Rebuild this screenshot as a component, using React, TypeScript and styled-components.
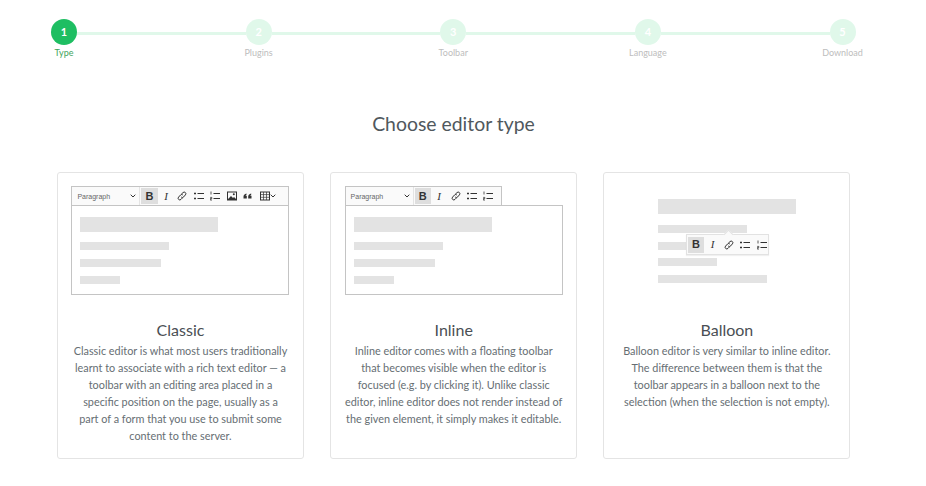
import { Fragment, ReactNode } from "react";
import styled, { createGlobalStyle } from "styled-components";

const GlobalStyle = createGlobalStyle`
  html, body {
    margin: 0;
    background: #fff;
    font-family: "Lato", "Open Sans", sans-serif;
  }
`;

const Page = styled.div`
  width: 793px;
  padding: 19px 0 0 57px;
`;

const Stepper = styled.div`
  display: flex;
  margin: 0 0 0 -6px;
  width: 804.5px;
`;

const Step = styled.div`
  display: flex;
  flex: none;
  flex-direction: column;
  align-items: center;
  width: 26px;
`;

const Circle = styled.div<{ $active?: boolean }>`
  display: flex;
  flex: none;
  align-items: center;
  justify-content: center;
  width: 26px;
  height: 26px;
  padding-bottom: 2px;
  box-sizing: border-box;
  border-radius: 50%;
  background: ${(p) => (p.$active ? "#1ebe62" : "#e0f8ea")};
  color: #fff;
  font-size: 11px;
  font-weight: 700;
`;

const StepLabel = styled.div<{ $active?: boolean }>`
  margin-top: 2px;
  color: ${(p) => (p.$active ? "#3fa45c" : "#bdbdbd")};
  font-size: 9px;
  line-height: 12px;
  white-space: nowrap;
`;

const Connector = styled.div`
  flex: 1;
  height: 3px;
  margin-top: 13px;
  background: #e0f8ea;
`;

const Heading = styled.h1`
  margin: 51px 0 34px;
  color: #50585d;
  font-size: 19.4px;
  font-weight: 400;
  line-height: 28px;
  text-align: center;
`;

const Cards = styled.div`
  display: grid;
  grid-template-columns: repeat(3, 247px);
  gap: 26.2px;
`;

const Card = styled.div`
  display: flex;
  flex-direction: column;
  align-items: center;
  box-sizing: border-box;
  height: 287px;
  padding: 13px 10px 0;
  border: 1px solid #e4e4e4;
  border-radius: 3px;
  text-align: center;
`;

const Preview = styled.div`
  align-self: flex-start;
  width: 218px;
  height: 134px;
  margin-left: 3.4px;
`;

const Toolbar = styled.div<{ $shrink?: boolean }>`
  display: flex;
  align-items: center;
  box-sizing: border-box;
  width: ${(p) => (p.$shrink ? "157px" : "100%")};
  height: 19px;
  padding-left: 1px;
  border: 1px solid #c4c4c4;
  border-bottom: 0;
  background: #fafafa;
`;

const Dropdown = styled.div`
  display: flex;
  align-items: center;
  justify-content: space-between;
  box-sizing: border-box;
  width: 67px;
  height: 18px;
  margin-right: 1px;
  padding: 0 3px 0 4px;
  border-right: 1px solid #e4e4e4;
  color: #666;
  font-family: "Liberation Sans", sans-serif;
  font-size: 7px;
`;

const Tool = styled.span<{ $on?: boolean; $wide?: boolean }>`
  display: flex;
  flex: none;
  align-items: center;
  justify-content: center;
  width: ${(p) => (p.$wide ? "24px" : "16.4px")};
  height: 16px;
  background: ${(p) => (p.$on ? "#dedede" : "transparent")};
  color: #333;
  font-size: 11px;
  line-height: 1;
`;

const BoldMark = styled.span`
  font-family: "Liberation Sans", sans-serif;
  font-weight: 700;
`;

const ItalicMark = styled.span`
  font-family: "Liberation Serif", serif;
  font-style: italic;
`;

const EditArea = styled.div`
  box-sizing: border-box;
  height: 90px;
  padding: 11px 8px;
  border: 1px solid #c4c4c4;
  background: #fff;
`;

const Bar = styled.div<{ $w: number; $big?: boolean }>`
  width: ${(p) => p.$w}px;
  height: ${(p) => (p.$big ? 15 : 8)}px;
  margin-bottom: ${(p) => (p.$big ? 10 : 9)}px;
  background: #e3e3e3;
`;

const BalloonPreview = styled.div`
  position: relative;
  align-self: center;
  box-sizing: border-box;
  width: 138px;
  height: 134px;
  padding-top: 13px;
`;

const BalloonBar = styled(Bar)`
  margin-bottom: ${(p) => (p.$big ? 11 : 8.5)}px;
`;

const Balloon = styled.div`
  position: absolute;
  top: 48px;
  left: 28px;
  display: flex;
  align-items: center;
  box-sizing: border-box;
  width: 83px;
  height: 21px;
  padding-left: 1px;
  border: 1px solid #e2e2e2;
  background: #fafafa;
  box-shadow: 0 1px 1px rgba(0, 0, 0, 0.06);

  &::before {
    content: "";
    position: absolute;
    top: -4px;
    left: 38px;
    width: 6px;
    height: 6px;
    border-top: 1px solid #e2e2e2;
    border-left: 1px solid #e2e2e2;
    background: #fafafa;
    transform: rotate(45deg);
  }
`;

const Title = styled.h2`
  margin: 0;
  color: #4a4f54;
  font-size: 16px;
  font-weight: 400;
  line-height: 20px;
`;

const Description = styled.p<{ $inset: number }>`
  margin: 3px 0 0;
  padding: 0 ${(p) => p.$inset}px;
  color: #666e73;
  font-size: 10.85px;
  line-height: 16.9px;
`;

function Svg({ w = 10, children }: { w?: number; children: ReactNode }) {
  return (
    <svg width={w} height="10" viewBox={`0 0 ${w} 10`} fill="none" stroke="#333" strokeWidth="1">
      {children}
    </svg>
  );
}

const Chevron = () => (
  <svg width="6" height="4" viewBox="0 0 6 4" fill="none" stroke="#333" strokeWidth="1">
    <path d="M.7.7 3 3l2.3-2.3" />
  </svg>
);

const LinkIcon = () => (
  <Svg>
    <path d="M4.2 3.4 6 1.6a1.6 1.6 0 0 1 2.4 2.3L6.5 6a1.6 1.6 0 0 1-2.3 0" />
    <path d="M5.8 6.6 4 8.4a1.6 1.6 0 0 1-2.4-2.3L3.5 4a1.6 1.6 0 0 1 2.3 0" />
  </Svg>
);

const BulletIcon = () => (
  <Svg>
    <path d="M3.5 2.5H10M3.5 7.5H10" />
    <path d="M0 2.5h2M0 7.5h2" strokeWidth="1.6" />
  </Svg>
);

const NumberIcon = () => (
  <Svg>
    <path d="M3.5 2.5H10M3.5 7.5H10" />
    <path d="M1 .5v3M.2 6.4h1.6v1.2H.2v1.4h1.8" strokeWidth=".8" />
  </Svg>
);

const ImageIcon = () => (
  <Svg>
    <rect x=".5" y="1" width="9" height="8" />
    <path d="M1 8l3-3 2 2 1-1 2 2v1H1z" fill="#333" stroke="none" />
    <circle cx="6.8" cy="3.2" r="1" fill="#333" stroke="none" />
  </Svg>
);

const QuoteIcon = () => (
  <Svg>
    <path d="M.5 7.5V5.5C.5 4 1.5 3 3.5 2.5v1.2c-.6.2-.9.5-.9 1h1.2v2.8zM5.2 7.5V5.5c0-1.5 1-2.5 3-3v1.2c-.6.2-.9.5-.9 1h1.2v2.8z" fill="#333" stroke="none" />
  </Svg>
);

const TableIcon = () => (
  <Svg>
    <rect x=".5" y="1" width="9" height="8" />
    <path d="M.5 3.6h9M.5 6.3h9M3.5 1v8M6.5 1v8" strokeWidth=".7" />
  </Svg>
);

function BasicTools() {
  return (
    <>
      <Tool $on>
        <BoldMark>B</BoldMark>
      </Tool>
      <Tool>
        <ItalicMark>I</ItalicMark>
      </Tool>
      <Tool>
        <LinkIcon />
      </Tool>
      <Tool>
        <BulletIcon />
      </Tool>
      <Tool>
        <NumberIcon />
      </Tool>
    </>
  );
}

function EditorPreview({ full }: { full?: boolean }) {
  return (
    <Preview>
      <Toolbar $shrink={!full}>
        <Dropdown>
          Paragraph
          <Chevron />
        </Dropdown>
        <BasicTools />
        {full && (
          <>
            <Tool>
              <ImageIcon />
            </Tool>
            <Tool>
              <QuoteIcon />
            </Tool>
            <Tool $wide>
              <TableIcon />
              <Chevron />
            </Tool>
          </>
        )}
      </Toolbar>
      <EditArea>
        <Bar $w={138} $big />
        <Bar $w={89} />
        <Bar $w={81} />
        <Bar $w={40} />
      </EditArea>
    </Preview>
  );
}

function BalloonEditorPreview() {
  return (
    <BalloonPreview>
      <BalloonBar $w={138} $big />
      <BalloonBar $w={89} />
      <BalloonBar $w={89} />
      <BalloonBar $w={59} />
      <BalloonBar $w={109} />
      <Balloon>
        <BasicTools />
      </Balloon>
    </BalloonPreview>
  );
}

const steps = ["Type", "Plugins", "Toolbar", "Language", "Download"];

export default function App() {
  return (
    <Page>
      <GlobalStyle />
      <Stepper>
        {steps.map((label, i) => (
          <Fragment key={label}>
            {i > 0 && <Connector />}
            <Step>
              <Circle $active={i === 0}>{i + 1}</Circle>
              <StepLabel $active={i === 0}>{label}</StepLabel>
            </Step>
          </Fragment>
        ))}
      </Stepper>
      <Heading>Choose editor type</Heading>
      <Cards>
        <Card>
          <EditorPreview full />
          <Title>Classic</Title>
          <Description $inset={5}>
            Classic editor is what most users traditionally learnt to associate with a rich text editor — a toolbar
            with an editing area placed in a specific position on the page, usually as a part of a form that you use
            to submit some content to the server.
          </Description>
        </Card>
        <Card>
          <EditorPreview />
          <Title>Inline</Title>
          <Description $inset={3}>
            Inline editor comes with a floating toolbar that becomes visible when the editor is focused (e.g. by
            clicking it). Unlike classic editor, inline editor does not render instead of the given element, it simply
            makes it editable.
          </Description>
        </Card>
        <Card>
          <BalloonEditorPreview />
          <Title>Balloon</Title>
          <Description $inset={3}>
            Balloon editor is very similar to inline editor. The difference between them is that the toolbar appears
            in a balloon next to the selection (when the selection is not empty).
          </Description>
        </Card>
      </Cards>
    </Page>
  );
}
